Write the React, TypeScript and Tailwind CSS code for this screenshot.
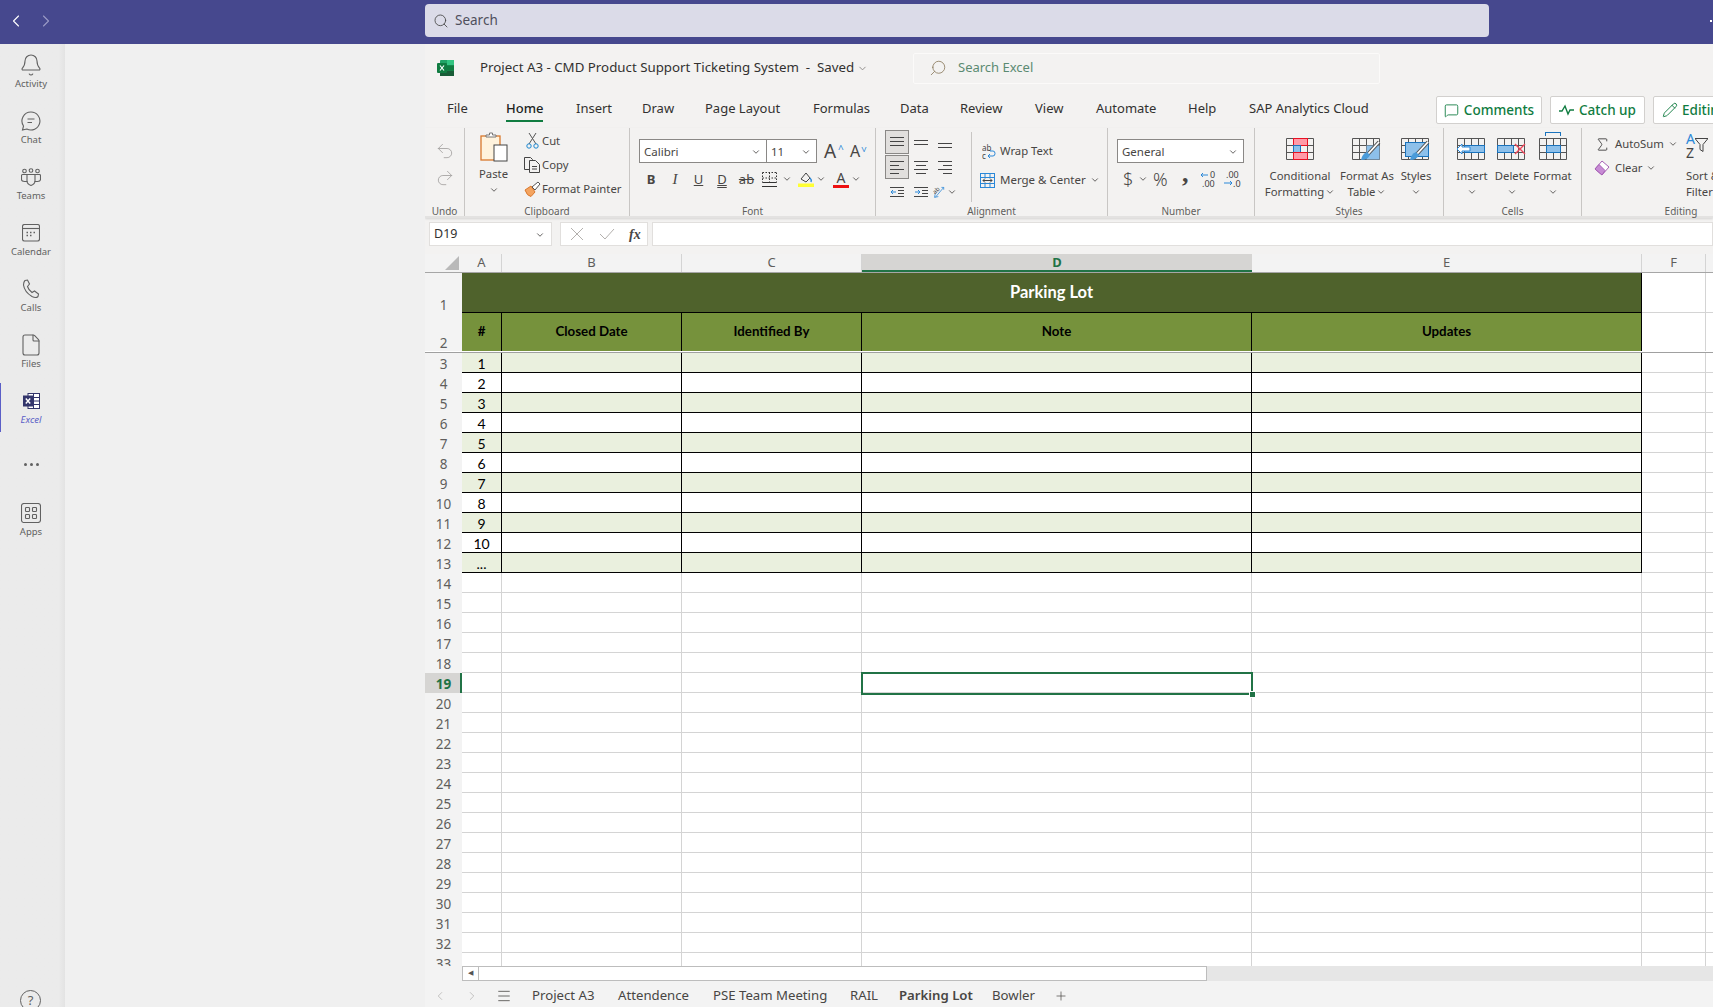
import { Bell, File, Search, ChevronDown, ChevronLeft, ChevronRight, Undo2, Redo2, Menu, Plus, MessageSquare, Pencil, Sigma } from "lucide-react";

const navItems = ["Activity", "Chat", "Teams", "Calendar", "Calls", "Files", "Excel"];

function NavIcon({ name }: { name: string }) {
  if (name === "Activity") return <Bell size={24} strokeWidth={1.100} className="text-[#616161]" />;
  if (name === "Files") return <File size={24} strokeWidth={1.100} className="text-[#616161]" />;
  if (name === "Calls")
    return (
      <svg width="18" height="20" viewBox="0 0 18 20" fill="none" stroke="#616161" strokeWidth="1.100">
        <path d="M3 1.500L5.500 1 7.500 5 5.500 7.500Q6.500 11 10 13.500L12.500 12 16.500 15 16 17.500Q14 19.500 10 17.500 2.500 13 1.500 6 1.500 3 3 1.500z" />
      </svg>
    );
  if (name === "Chat")
    return (
      <svg width="20" height="20" viewBox="0 0 20 20" fill="none" stroke="#616161" strokeWidth="1.100">
        <path d="M10 1a9 9 0 1 1-4.200 17l-4.300 1 1-4A9 9 0 0 1 10 1z" />
        <path d="M6.500 8h7M6.500 11.500h4.500" />
      </svg>
    );
  if (name === "Teams")
    return (
      <svg width="20" height="18" viewBox="0 0 20 18" fill="none" stroke="#616161" strokeWidth="1.100">
        <circle cx="3.500" cy="3" r="1.800" />
        <circle cx="10" cy="2.500" r="1.800" />
        <circle cx="16.500" cy="3" r="1.800" />
        <path d="M6 6.500h8v6.500q0 3-4 4.500q-4-1.500-4-4.500z" />
        <path d="M6 6.500H1.500a1 1 0 0 0-1 1v4q0 2 3 2h3M14 6.500h4.500a1 1 0 0 1 1 1v4q0 2-3 2h-3" />
      </svg>
    );
  if (name === "Calendar")
    return (
      <svg width="18" height="18" viewBox="0 0 18 18" fill="none" stroke="#616161" strokeWidth="1.100">
        <rect x="0.500" y="0.500" width="17" height="16.500" rx="2" />
        <path d="M0.500 4.500h17" />
        <path d="M4.500 8.500h1.500M8 8.500h1.500M11.500 8.500h1.500M4.500 11.500h1.500M8 11.500h1.500" strokeWidth="1.400" />
      </svg>
    );
  return (
    <svg width="17" height="16" viewBox="0 0 17 16">
      <rect x="5" y="0.500" width="11.500" height="15" fill="#fff" stroke="#33356b" />
      <path d="M5 4.500h11.500M5 8h11.500M5 11.500h11.500M10.500 0.500v15" stroke="#33356b" />
      <rect x="0" y="2.500" width="10" height="11" fill="#33356b" />
      <path d="M2.800 5.500l4.400 5M7.200 5.500l-4.400 5" stroke="#fff" strokeWidth="1.400" />
    </svg>
  );
}

function NavRail() {
  return (
    <div className="flex w-[65px] shrink-0 flex-col overflow-hidden bg-gradient-to-r from-[#ebebeb] from-90% to-[#e3e3e3] pr-[3px]">
      {navItems.map((name) => (
        <div key={name} className="relative flex h-[56px] flex-col items-center pt-[11px]">
          {name === "Excel" && <span className="absolute left-0 top-[3px] h-[49px] w-[1px] bg-[#5b5fc7]" />}
          <div className="flex h-[20px] items-center justify-center"><NavIcon name={name} /></div>
          <span className={`mt-[2px] text-[9.500px] leading-[13px] ${name === "Excel" ? "italic text-[#5b5fc7]" : "text-[#616161]"}`}>{name}</span>
        </div>
      ))}
      <div className="flex h-[56px] items-center justify-center gap-[3px]">
        <span className="size-[3px] rounded-full bg-[#616161]" />
        <span className="size-[3px] rounded-full bg-[#616161]" />
        <span className="size-[3px] rounded-full bg-[#616161]" />
      </div>
      <div className="flex flex-col items-center pt-[11px]">
        <svg width="20" height="20" viewBox="0 0 20 20" fill="none" stroke="#616161" strokeWidth="1.100">
          <rect x="0.500" y="0.500" width="19" height="19" rx="2.500" />
          <rect x="4.500" y="4.500" width="4" height="4" rx="0.800" />
          <rect x="11.500" y="4.500" width="4" height="4" rx="0.800" />
          <rect x="4.500" y="11.500" width="4" height="4" rx="0.800" />
          <rect x="11.500" y="11.500" width="4" height="4" rx="0.800" />
        </svg>
        <span className="mt-[2px] text-[9.500px] leading-[13px] text-[#616161]">Apps</span>
      </div>
      <div className="mt-auto -mb-[4px] flex justify-center pr-[1px]">
        <div className="flex size-[21px] items-center justify-center rounded-full border border-[#616161] text-[13px] text-[#616161]">?</div>
      </div>
    </div>
  );
}

function TeamsBar() {
  return (
    <div className="flex h-[44px] shrink-0 items-center bg-[#46488e] pb-[3px]">
      <div className="flex w-[425px] items-center pl-[6px]">
        <ChevronLeft size={20} strokeWidth={1.300} className="text-white" />
        <ChevronRight size={20} strokeWidth={1.300} className="ml-[10px] text-[#9a9bc6]" />
      </div>
      <div className="flex h-[33px] w-[1064px] items-center rounded-[4px] bg-[#dbdbe8] pl-[8px] text-[13.500px] text-[#4f4f5c]">
        <Search size={16} strokeWidth={1.300} className="mr-[6px] text-[#484848]" />
        Search
      </div>
      <span className="ml-auto mr-[1px] size-[2px] bg-white" />
    </div>
  );
}

const tabs = [
  { label: "File", w: "w-[59px]" },
  { label: "Home", w: "w-[70px]" },
  { label: "Insert", w: "w-[66px]" },
  { label: "Draw", w: "w-[63px]" },
  { label: "Page Layout", w: "w-[108px]" },
  { label: "Formulas", w: "w-[87px]" },
  { label: "Data", w: "w-[60px]" },
  { label: "Review", w: "w-[75px]" },
  { label: "View", w: "w-[61px]" },
  { label: "Automate", w: "w-[92px]" },
  { label: "Help", w: "w-[61px]" },
  { label: "SAP Analytics Cloud", w: "w-[187px]" },
];

function ExcelHeader() {
  return (
    <>
      <div className="flex h-[46px] shrink-0 items-center pt-[2px]">
        <svg className="ml-[12px]" width="17" height="16" viewBox="0 0 17 16">
          <rect x="3" y="0" width="14" height="16" rx="1" fill="#21a366" />
          <rect x="10" y="0" width="7" height="5.300" fill="#33c481" />
          <rect x="3" y="10.700" width="14" height="5.300" fill="#185c37" />
          <rect x="10" y="5.300" width="7" height="5.400" fill="#107c41" />
          <rect x="0" y="3" width="10" height="10" rx="1" fill="#107c41" />
          <path d="M3 5.500l4 5M7 5.500l-4 5" stroke="#fff" strokeWidth="1.200" />
        </svg>
        <div className="ml-[26px] flex w-[433px] shrink-0 items-center">
          <span className="whitespace-nowrap text-[13.300px] text-[#323130]">Project A3 - CMD Product Support Ticketing System&nbsp; - &nbsp;Saved</span>
          <ChevronDown size={11} className="ml-[3px] text-[#8a8886]" />
        </div>
        <div className="flex h-[31px] w-[467px] items-center rounded-[2px] border border-[#fbfaf9] pl-[15px] text-[13px] text-[#5b8a72]">
          <Search size={18} strokeWidth={1.100} className="mr-[11px] -scale-x-100 text-[#8a7a5c]" />
          Search Excel
        </div>
      </div>
      <div className="flex h-[38px] shrink-0 items-start pl-[22px]">
        {tabs.map((t) => (
          <div key={t.label} className={`${t.w} flex shrink-0 pt-[8px]`}>
            <span className={`whitespace-nowrap pb-[2px] text-[13px] leading-[20px] ${t.label === "Home" ? "border-b-2 border-[#107c41] font-medium text-[#201f1e]" : "border-b-2 border-transparent text-[#323130]"}`}>{t.label}</span>
          </div>
        ))}
        <div className="mt-[6px] flex h-[28px] w-[106px] shrink-0 items-center justify-center gap-[5px] rounded-[2px] border border-[#d2d0ce] bg-white text-[13.500px] font-medium text-[#107c41]">
          <MessageSquare size={15} strokeWidth={1.400} />Comments
        </div>
        <div className="ml-[8px] mt-[6px] flex h-[28px] w-[95px] shrink-0 items-center justify-center gap-[4px] rounded-[2px] border border-[#d2d0ce] bg-white text-[13.500px] font-medium text-[#107c41]">
          <svg width="16" height="12" viewBox="0 0 16 12" fill="none" stroke="#107c41" strokeWidth="1.400"><path d="M0 7h3l3-5 3 8 2-4h4" /></svg>Catch up
        </div>
        <div className="ml-[8px] mt-[6px] flex h-[28px] w-[100px] shrink-0 items-center gap-[4px] rounded-[2px] border border-[#d2d0ce] bg-white pl-[8px] text-[13.500px] font-medium text-[#107c41]">
          <Pencil size={16} strokeWidth={1.400} />Editing
        </div>
      </div>
    </>
  );
}

function Group({ w, label, border = true, children }: { w: string; label: string; border?: boolean; children: React.ReactNode }) {
  return (
    <div className={`${w} flex h-[88px] shrink-0 flex-col ${border ? "border-r border-[#c8c6c4]" : ""}`}>
      <div className="min-h-0 flex-1">{children}</div>
      <div className="h-[10px] text-center text-[10px] leading-[10px] text-[#605e5c]">{label}</div>
    </div>
  );
}

const Chev = ({ className = "" }: { className?: string }) => <ChevronDown size={10} strokeWidth={2} className={`shrink-0 text-[#484644] ${className}`} />;

function PasteIcon() {
  return (
    <svg width="28" height="30" viewBox="0 0 28 30">
      <rect x="1" y="4" width="19" height="24" fill="#fff3dd" stroke="#d9782d" strokeWidth="1.300" />
      <path d="M6 5V3h3.500V1h3v2H16v2z" fill="#fff" stroke="#777" />
      <rect x="14" y="13" width="13" height="16" fill="#fff" stroke="#444" />
    </svg>
  );
}

function ClipRow({ icon, label }: { icon: React.ReactNode; label: string }) {
  return (
    <div className="flex h-[24px] items-center">
      <div className="flex w-[20px] justify-center">{icon}</div>
      <span className="whitespace-nowrap text-[11.300px] text-[#484644]">{label}</span>
    </div>
  );
}

function Clipboard() {
  return (
    <div className="flex">
      <div className="flex w-[57px] flex-col items-center pt-[4px]">
        <PasteIcon />
        <span className="mt-[4px] text-[11.300px] leading-[16px] text-[#484644]">Paste</span>
        <Chev className="mt-[3px]" />
      </div>
      <div className="flex flex-col pt-[1px]">
        <ClipRow label="Cut" icon={
          <svg width="13" height="16" viewBox="0 0 13 16" fill="none"><path d="M3 0l7 11M10 0L3 11" stroke="#555" /><circle cx="3" cy="13" r="2.200" stroke="#1a86d0" /><circle cx="10" cy="13" r="2.200" stroke="#1a86d0" /></svg>
        } />
        <ClipRow label="Copy" icon={
          <svg width="16" height="16" viewBox="0 0 16 16" fill="none" stroke="#444"><path d="M5 12.500H.500V.500h6l2 2v1" /><path d="M5.500 3.500h6l4 4v8h-10z" /><path d="M8 9.500h5M8 12h5" /></svg>
        } />
        <ClipRow label="Format Painter" icon={
          <svg width="17" height="16" viewBox="0 0 17 16"><path d="M1 9l6-4 4 6-4 4.500Q3 15 1 9z" fill="#f4a460" stroke="#d9782d" /><path d="M8 6l6-5 2 2-5 6z" fill="#fff" stroke="#555" /></svg>
        } />
      </div>
    </div>
  );
}

function Select({ w, label, className = "" }: { w: string; label: string; className?: string }) {
  return (
    <div className={`${w} flex items-center bg-white pl-[4px] pr-[5px] pt-[1px] text-[11.500px] leading-[16px] text-[#484644] ${className}`}>
      <span className="flex-1">{label}</span>
      <Chev />
    </div>
  );
}

function FontGroup() {
  const tool = "flex h-[20px] items-center justify-center text-[#484644]";
  return (
    <div className="pl-[9px] pt-[11px]">
      <div className="flex items-center">
        <div className="flex h-[24px] border border-[#8a8886]">
          <Select w="w-[127px]" label="Calibri" className="border-r border-[#8a8886]" />
          <Select w="w-[49px]" label="11" />
        </div>
        <span className="relative ml-[7px] w-[26px] text-[19px] leading-[24px] text-[#484644]">A<span className="absolute left-[14px] top-[-2px] text-[10px] text-[#2b88d8]">^</span></span>
        <span className="relative w-[22px] text-[16px] leading-[24px] text-[#484644]">A<span className="absolute left-[11px] top-[-3px] rotate-180 text-[10px] text-[#2b88d8]">^</span></span>
      </div>
      <div className="mt-[6px] flex text-[13px] leading-[20px]">
        <span className={`${tool} w-[24px] font-bold`}>B</span>
        <span className={`${tool} w-[24px] italic font-['Liberation_Serif',serif] text-[15px]`}>I</span>
        <span className={`${tool} w-[23px] underline`}>U</span>
        <span className={`${tool} w-[24px] underline decoration-double`}>D</span>
        <span className={`${tool} w-[25px] line-through`}>ab</span>
        <span className={`${tool} w-[21px]`}>
          <svg width="15" height="15" viewBox="0 0 15 15" fill="none" stroke="#333"><path d="M.500.500h14M.500.500v10M14.500.500v10M7.500.500v10M.500 6h14" strokeDasharray="1.500 1.500" /><path d="M.500 10.500h14M0 14.500h15" /></svg>
        </span>
        <span className={`${tool} w-[14px]`}><Chev /></span>
        <span className={`${tool} w-[24px]`}>
          <svg width="16" height="16" viewBox="0 0 16 16" fill="none"><path d="M3 8l5-6 4 5-4 4z" stroke="#444" /><path d="M12 7q2 2 1 4" stroke="#2b88d8" strokeWidth="1.400" /><rect x="0" y="12.500" width="16" height="3.500" fill="#ffff33" /></svg>
        </span>
        <span className={`${tool} w-[6px]`}><Chev /></span>
        <span className={`${tool} ml-[6px] w-[22px]`}>
          <span className="flex flex-col items-center text-[14px] leading-[13px]">A<span className="mt-[1px] h-[3px] w-[16px] bg-[#ee1111]" /></span>
        </span>
        <span className={`${tool} w-[8px]`}><Chev /></span>
      </div>
    </div>
  );
}

const lines = (ys: number[], widths: number[]) => (
  <svg width="16" height="20" viewBox="0 0 16 20" stroke="#444">
    {ys.map((y, i) => <path key={i} d={`M${(14 - widths[i]) / 2 + 1} ${y}.500h${widths[i]}`} />)}
  </svg>
);

function AlignCell({ active, children }: { active?: boolean; children: React.ReactNode }) {
  return (
    <div className={`flex h-[24px] w-[24px] items-center justify-center ${active ? "border border-[#8a8886] bg-[#e1dfdd]" : ""}`}>{children}</div>
  );
}

function AlignGroup() {
  return (
    <div className="flex pl-[9px] pt-[2px]">
      <div className="grid w-[72px] grid-cols-3 gap-y-[1px]">
        <AlignCell active>{lines([5, 9, 13], [14, 14, 14])}</AlignCell>
        <AlignCell>{lines([8, 12], [14, 14])}</AlignCell>
        <AlignCell>{lines([11, 15], [14, 14])}</AlignCell>
        <AlignCell active>
          <svg width="16" height="16" viewBox="0 0 16 16" stroke="#444"><path d="M1 2.500h14M1 6.500h9M1 10.500h14M1 14.500h9" /></svg>
        </AlignCell>
        <AlignCell>
          <svg width="16" height="16" viewBox="0 0 16 16" stroke="#444"><path d="M1 2.500h14M3 6.500h10M1 10.500h14M3 14.500h10" /></svg>
        </AlignCell>
        <AlignCell>
          <svg width="16" height="16" viewBox="0 0 16 16" stroke="#444"><path d="M1 2.500h14M6 6.500h9M1 10.500h14M6 14.500h9" /></svg>
        </AlignCell>
        <AlignCell>
          <svg width="16" height="12" viewBox="0 0 16 12" fill="none"><path d="M1 1.500h14M9 4.500h6M9 7.500h6M1 10.500h14" stroke="#444" /><path d="M7 6H2m2-2L2 6l2 2" stroke="#2b88d8" /></svg>
        </AlignCell>
        <AlignCell>
          <svg width="16" height="12" viewBox="0 0 16 12" fill="none"><path d="M1 1.500h14M9 4.500h6M9 7.500h6M1 10.500h14" stroke="#444" /><path d="M2 6h5M5 4l2 2-2 2" stroke="#2b88d8" /></svg>
        </AlignCell>
        <div className="flex h-[24px] items-center">
          <svg width="17" height="16" viewBox="0 0 17 16" fill="none"><path d="M3 15L14 2" stroke="#2b88d8" /><path d="M11 2h3v3M3 10l-1 5 5-1" stroke="#2b88d8" /><text x="0" y="9" fontSize="8" fill="#444" transform="rotate(-45 4 7)">ab</text></svg>
          <Chev className="ml-[1px]" />
        </div>
      </div>
      <div className="ml-[14px] mt-[2px] h-[70px] w-px bg-[#c8c6c4]" />
      <div className="flex flex-col pl-[8px]">
        <div className="mt-[9px] flex h-[24px] items-center text-[11.300px] text-[#484644]">
          <svg className="ml-[2px] mr-[4px]" width="14" height="15" viewBox="0 0 14 15" fill="none"><text x="0" y="7" fontSize="8" fill="#444">ab</text><text x="0" y="15" fontSize="8" fill="#444">c</text><path d="M6 12h5q2 0 2-2.500T11 7H8M8 10l-2 2 2 2" stroke="#2b88d8" /></svg>
          Wrap Text
        </div>
        <div className="mt-[5px] flex h-[24px] items-center whitespace-nowrap text-[11.500px] text-[#484644]">
          <svg className="mr-[5px]" width="15" height="15" viewBox="0 0 15 15" fill="none"><rect x=".500" y=".500" width="14" height="14" stroke="#2b88d8" /><path d="M0 4.500h15M0 10.500h15M5 .500v4M10 .500v4M5 10.500v4M10 10.500v4" stroke="#2b88d8" /><path d="M3 7.500h9M5 5.500l-2 2 2 2M10 5.500l2 2-2 2" stroke="#444" /></svg>
          Merge &amp; Center
          <Chev className="ml-[4px]" />
        </div>
      </div>
    </div>
  );
}

function NumberGroup() {
  return (
    <div className="pl-[9px] pt-[11px]">
      <Select w="w-[127px]" label="General" className="h-[24px] border border-[#8a8886]" />
      <div className="mt-[6px] flex h-[20px] items-center leading-[20px] text-[#484644]">
        <span className="ml-[6px] w-[15px] text-[18px] font-light">$</span>
        <Chev className="mr-[5px]" />
        <span className="w-[29px] text-[18px] font-light">%</span>
        <span className="-mt-[10px] w-[18px] font-['Liberation_Serif',serif] text-[26px] font-bold leading-[16px]">,</span>
        <svg width="18" height="18" viewBox="0 0 18 18" fill="none"><path d="M8 5H1m2-2L1 5l2 2" stroke="#2b88d8" /><text x="10" y="8" fontSize="9" fill="#444">0</text><text x="2" y="17" fontSize="9" fill="#444">.00</text></svg>
        <svg className="ml-[5px]" width="18" height="18" viewBox="0 0 18 18" fill="none"><text x="3" y="8" fontSize="9" fill="#444">.00</text><path d="M1 13h8m-2-2l2 2-2 2" stroke="#2b88d8" /><text x="10" y="17" fontSize="9" fill="#444">.0</text></svg>
      </div>
    </div>
  );
}

// 28x22 sheet grid with 4 columns and 3 rows, things drawn on top go in children
function Sheet({ w = 30, children, after }: { w?: number; children?: React.ReactNode; after?: React.ReactNode }) {
  return (
    <svg width={w} height="24" viewBox={`0 0 ${w} 24`} fill="none">
      <path d="M1.500 1.500h27v21h-27zM1.500 8.500h27M1.500 15.500h27M8.500 1.500v21M15.500 1.500v21M22.500 1.500v21" stroke="#555" />
      {children}
      {after}
    </svg>
  );
}

const Brush = () => (
  <>
    <path d="M28 5L17 17" stroke="#555" strokeWidth="3.500" />
    <path d="M28 5L17 17" stroke="#fff" strokeWidth="1.800" />
    <path d="M10 23q1-6 6-8l3 3q-2 5-9 5z" fill="#4a9bd9" />
  </>
);

function BigButton({ w, icon, text, chevron = "below" }: { w: string; icon: React.ReactNode; text: string[]; chevron?: "below" | "inline" }) {
  return (
    <div className={`${w} flex shrink-0 flex-col items-center`}>
      <div className="flex h-[31px] items-start">{icon}</div>
      <span className="whitespace-nowrap text-[11.300px] leading-[16px] text-[#484644]">{text[0]}</span>
      {chevron === "inline" ? (
        <span className="flex items-center whitespace-nowrap text-[11.300px] leading-[16px] text-[#484644]">{text[1]}<Chev className="ml-[1px]" /></span>
      ) : (
        <span className="flex h-[16px] items-center"><Chev /></span>
      )}
    </div>
  );
}

function StylesGroup() {
  return (
    <div className="flex pl-[4px] pt-[9px]">
      <BigButton w="w-[82px]" chevron="inline" text={["Conditional", "Formatting"]} icon={
        <Sheet>
          <rect x="8.500" y="1.500" width="14" height="7" fill="#ff9aa8" stroke="#e81123" />
          <rect x="8.500" y="8.500" width="7" height="7" fill="#8dc0ea" stroke="#1a73bd" />
          <rect x="8.500" y="15.500" width="14" height="7" fill="#ff9aa8" stroke="#e81123" />
        </Sheet>
      } />
      <BigButton w="w-[52px]" chevron="inline" text={["Format As", "Table"]} icon={
        <Sheet w={32} after={<Brush />}>
          <rect x="15.500" y="8.500" width="13" height="14" fill="#8dc0ea" />
        </Sheet>
      } />
      <BigButton w="w-[46px]" text={["Styles"]} icon={
        <Sheet w={32} after={<Brush />}>
          <rect x="5.500" y="5.500" width="23" height="14" fill="#8dc0ea" stroke="#1a73bd" />
        </Sheet>
      } />
    </div>
  );
}

function CellsGroup() {
  return (
    <div className="flex pl-[8px] pt-[9px]">
      <BigButton w="w-[40px]" text={["Insert"]} icon={
        <Sheet w={32} after={<path d="M14 10H6V7l-5 5 5 5v-3h8z" fill="#fff" stroke="#2b88d8" />}>
          <rect x="8.500" y="8.500" width="20" height="7" fill="#8dc0ea" stroke="#1a73bd" />
        </Sheet>
      } />
      <BigButton w="w-[40px]" text={["Delete"]} icon={
        <Sheet w={32} after={<path d="M19 7l10 10M29 7L19 17" stroke="#f0465a" strokeWidth="1.400" />}>
          <rect x="1.500" y="8.500" width="16" height="7" fill="#8dc0ea" stroke="#1a73bd" />
        </Sheet>
      } />
      <BigButton w="w-[41px]" text={["Format"]} icon={
        <div className="-mt-[5px] flex flex-col items-center">
          <span className="mb-[1px] h-[4px] w-[16px] border-x border-t border-[#1a73bd]" />
          <Sheet>
            <rect x="8.500" y="8.500" width="14" height="7" fill="#8dc0ea" stroke="#1a73bd" />
          </Sheet>
        </div>
      } />
    </div>
  );
}

function EditingGroup() {
  return (
    <div className="flex pl-[12px] pt-[4px]">
      <div className="flex w-[92px] shrink-0 flex-col">
        <div className="flex h-[24px] items-center text-[11.300px] text-[#484644]">
          <Sigma size={17} strokeWidth={1.200} className="text-[#333]" />
          <span className="ml-[4px]">AutoSum</span>
          <Chev className="ml-[4px]" />
        </div>
        <div className="flex h-[24px] items-center text-[11.300px] text-[#484644]">
          <svg width="16" height="16" viewBox="0 0 16 16"><path d="M1 9l7-8 7 6-7 8z" fill="#fff" stroke="#a55fb5" /><path d="M1 9l4-4.500 6 6L8 15z" fill="#c78bd4" stroke="#a55fb5" /></svg>
          <span className="ml-[5px]">Clear</span>
          <Chev className="ml-[4px]" />
        </div>
      </div>
      <div className="flex flex-col">
        <div className="flex h-[36px] items-start">
          <span className="flex flex-col text-[14px] leading-[14px]"><span className="text-[#2b88d8]">A</span><span className="text-[#444]">Z</span></span>
          <svg className="mt-[6px]" width="13" height="14" viewBox="0 0 13 14" fill="none" stroke="#444"><path d="M0 .500h13l-5 6v7l-3-2v-5z" /></svg>
        </div>
        <span className="whitespace-nowrap text-[11.300px] leading-[16px] text-[#484644]">Sort &amp;</span>
        <span className="text-[11.300px] leading-[16px] text-[#484644]">Filter</span>
      </div>
    </div>
  );
}

function Ribbon() {
  return (
    <div className="relative z-10 flex h-[90px] shrink-0 items-start border-b-2 border-[#e3e2e1] shadow-[0_1px_2px_rgba(0,0,0,0.12)]">
      <Group w="w-[40px]" label="Undo">
        <div className="flex flex-col items-center gap-[7px] pt-[13px] text-[#a19f9d]">
          <Undo2 size={20} strokeWidth={1} />
          <Redo2 size={20} strokeWidth={1} />
        </div>
      </Group>
      <Group w="w-[165px]" label="Clipboard"><Clipboard /></Group>
      <Group w="w-[246px]" label="Font"><FontGroup /></Group>
      <Group w="w-[232px]" label="Alignment"><AlignGroup /></Group>
      <Group w="w-[147px]" label="Number"><NumberGroup /></Group>
      <Group w="w-[189px]" label="Styles"><StylesGroup /></Group>
      <Group w="w-[138px]" label="Cells"><CellsGroup /></Group>
      <Group w="w-[198px]" label="Editing" border={false}><EditingGroup /></Group>
    </div>
  );
}

function FormulaBar() {
  return (
    <div className="flex h-[36px] shrink-0 items-start pl-[4px] pt-[4px]">
      <div className="flex h-[24px] w-[123px] items-center border border-[#e1dfdd] bg-white pl-[4px] pr-[6px] pt-[1px] text-[12.500px] text-[#323130]">
        <span className="flex-1">D19</span>
        <Chev />
      </div>
      <div className="ml-[8px] flex h-[24px] w-[88px] items-center border border-[#e1dfdd] bg-white pl-[9px] text-[#b3b0ad]">
        <svg width="14" height="14" viewBox="0 0 14 14" fill="none" stroke="currentColor"><path d="M1 1l12 12M13 1L1 13" /></svg>
        <svg className="ml-[15px]" width="16" height="12" viewBox="0 0 16 12" fill="none" stroke="currentColor"><path d="M1 6l5 5L15 1" /></svg>
        <span className="ml-[14px] font-['Liberation_Serif',serif] text-[14px] font-bold italic text-[#484644]">fx</span>
      </div>
      <div className="ml-[4px] h-[24px] flex-1 border border-[#e1dfdd] bg-white" />
    </div>
  );
}

const cols = "grid grid-cols-[37px_40px_180px_180px_390px_390px_64px_8px]";
const grayCell = "border-b border-r border-[#d4d4d4] bg-white";

function RowHead({ n, bottom, selected }: { n: number; bottom?: boolean; selected?: boolean }) {
  return (
    <div className={`relative flex justify-center text-[13.500px] leading-[18px] ${bottom ? "items-end" : "items-center"} ${selected ? "bg-[#d6d5d3] font-bold text-[#217346]" : "bg-[#f3f3f3] text-[#605e5c]"}`}>
      <span className="translate-y-[1px]">{n}</span>
      {selected && <span className="absolute right-0 top-0 h-full w-[2px] bg-[#217346]" />}
    </div>
  );
}

function EmptyRow({ n, selected }: { n: number; selected?: boolean }) {
  return (
    <div className={`${cols} h-[20px]`}>
      <RowHead n={n} selected={selected} />
      {[0, 1, 2, 3, 4, 5, 6].map((i) => <div key={i} className={grayCell} />)}
    </div>
  );
}

function DataRow({ n, label }: { n: number; label: string }) {
  const tinted = n % 2 === 1;
  const cell = `border-b border-r border-black ${tinted ? "bg-[#eaf0de]" : "bg-white"}`;
  return (
    <div className={`${cols} h-[20px]`}>
      <RowHead n={n} />
      <div className={`${cell} flex items-center justify-center font-['Lato',sans-serif] text-[14px] leading-[18px] text-black`}><span className="translate-y-[1px]">{label}</span></div>
      {[0, 1, 2, 3].map((i) => <div key={i} className={cell} />)}
      <div className={grayCell} />
      <div className={grayCell} />
    </div>
  );
}

function Sheet1() {
  const headers = ["#", "Closed Date", "Identified By", "Note", "Updates"];
  const dataLabels = ["1", "2", "3", "4", "5", "6", "7", "8", "9", "10", "..."];
  const empties = Array.from({ length: 20 }, (_, i) => i + 14);
  return (
    <div className="flex min-h-0 flex-1 flex-col bg-white">
      <div className={`${cols} h-[19px] shrink-0 border-b border-[#a6a6a6] bg-[#f3f3f3] text-[13px] leading-[16px] text-[#605e5c]`}>
        <div className="flex items-start justify-end pr-[3px] pt-[2px]">
          <span className="h-0 w-0 border-b-[14px] border-l-[14px] border-b-[#b9b9b9] border-l-transparent" />
        </div>
        {["A", "B", "C"].map((c) => <div key={c} className="flex items-center justify-center border-r border-[#d4d4d4] pb-[2px]">{c}</div>)}
        <div className="flex items-center justify-center border-b-2 border-[#217346] bg-[#d6d5d3] font-bold text-[#217346]">D</div>
        {["E", "F"].map((c) => <div key={c} className="flex items-center justify-center border-r border-[#d4d4d4] pb-[2px]">{c}</div>)}
        <div />
      </div>
      <div className="relative min-h-0 flex-1 overflow-hidden">
        <div className={`${cols} h-[40px]`}>
          <RowHead n={1} bottom />
          <div className="col-span-5 flex items-center justify-center border-b border-r border-black bg-[#4f622c] font-['Lato',sans-serif] text-[16.500px] font-bold text-white">Parking Lot</div>
          <div className={grayCell} />
          <div className={grayCell} />
        </div>
        <div className={`${cols} h-[38px]`}>
          <RowHead n={2} bottom />
          {headers.map((h) => (
            <div key={h} className="flex items-center justify-center border-r border-black bg-[#76923c] font-['Lato',sans-serif] text-[13.300px] font-bold text-black">{h}</div>
          ))}
          <div className="border-r border-[#d4d4d4] bg-white" />
          <div className="border-r border-[#d4d4d4] bg-white" />
        </div>
        <div className="ml-[37px] h-px bg-white" />
        <div className="h-px bg-[#a0a0a0]" />
        {dataLabels.map((label, i) => <DataRow key={label} n={i + 3} label={label} />)}
        {empties.map((n) => <EmptyRow key={n} n={n} selected={n === 19} />)}
        <div className="absolute left-[436px] top-[399px] h-[23px] w-[392px] border-2 border-[#217346]">
          <span className="absolute -bottom-[5px] -right-[5px] size-[7px] border border-white bg-[#217346]" />
        </div>
      </div>
      <div className="flex h-[15px] shrink-0 bg-[#e6e6e6]">
        <div className="w-[37px] bg-[#f3f3f3]" />
        <div className="flex w-[17px] items-center justify-center border border-[#bdbdbd] bg-white text-[7px] text-[#555]">◀</div>
        <div className="w-[728px] border border-l-0 border-[#bdbdbd] bg-white" />
      </div>
    </div>
  );
}

const sheets = [
  { label: "Project A3", w: "w-[86px]" },
  { label: "Attendence", w: "w-[95px]" },
  { label: "PSE Team Meeting", w: "w-[137px]" },
  { label: "RAIL", w: "w-[49px]" },
  { label: "Parking Lot", w: "w-[93px]" },
  { label: "Bowler", w: "w-[62px]" },
];

function SheetTabs() {
  return (
    <div className="flex h-[26px] shrink-0 items-center bg-[#f3f3f3] pt-[4px] text-[13.200px] text-[#484644]">
      <ChevronLeft size={14} strokeWidth={1} className="ml-[8px] text-[#a19f9d]" />
      <ChevronRight size={14} strokeWidth={1} className="ml-[18px] text-[#a19f9d]" />
      <Menu size={16} strokeWidth={1.200} className="ml-[17px]" />
      <div className="ml-[20px] flex">
        {sheets.map((s) => (
          <span key={s.label} className={`${s.w} shrink-0 whitespace-nowrap ${s.label === "Parking Lot" ? "font-semibold" : ""}`}>{s.label}</span>
        ))}
      </div>
      <Plus size={14} strokeWidth={1.200} />
    </div>
  );
}

export default function App() {
  return (
    <div className="flex h-screen w-screen flex-col overflow-hidden bg-[#f0f0f0] font-['Noto_Sans',sans-serif]">
      <TeamsBar />
      <div className="flex min-h-0 flex-1">
        <NavRail />
        <div className="w-[360px] shrink-0 bg-[#f0f0f0]" />
        <div className="flex min-w-0 flex-1 flex-col overflow-hidden bg-[#f3f2f1]">
          <ExcelHeader />
          <Ribbon />
          <FormulaBar />
          <Sheet1 />
          <SheetTabs />
        </div>
      </div>
    </div>
  );
}
